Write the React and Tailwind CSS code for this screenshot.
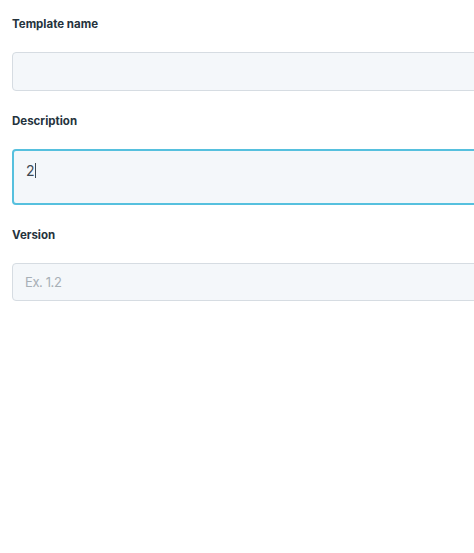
import React from 'react';

const fieldBase =
  'block w-full rounded-[4px] border border-[#d6dce2] bg-[#f4f7fa] px-3 text-[13px] text-[#3c4852] outline-none placeholder:text-[#a7afb6] placeholder:tracking-[-0.4px]';

export default function App() {
  return (
    <div className="h-[553px] w-[474px] overflow-hidden bg-white font-['Inter',sans-serif]">
      <form className="w-[540px] pl-3 pt-4">
        <label className="block text-[11.5px] font-bold leading-4 text-[#25333d]">Template name</label>
        <input type="text" className={`${fieldBase} mt-5 h-[39px]`} />

        <label className="mt-[22px] block text-[11.5px] font-bold leading-4 text-[#25333d]">Description</label>
        <div className="mt-5 h-[56px] w-full rounded-[4px] border-2 border-[#56c0de] bg-[#f4f7fa] px-3 pt-[10px] text-[14px] leading-4 text-[#3c4852]">
          2<span className="inline-block h-[15px] w-px translate-y-[2px] bg-[#3c4852]" />
        </div>

        <label className="mt-[22px] block text-[11.5px] font-bold leading-4 text-[#25333d]">Version</label>
        <input type="text" placeholder="Ex. 1.2" className={`${fieldBase} mt-5 h-[38px]`} />
      </form>
    </div>
  );
}
